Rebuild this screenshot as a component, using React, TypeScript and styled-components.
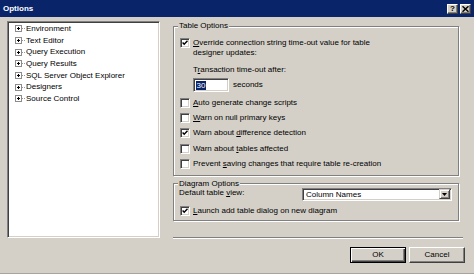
import React from "react";
import styled, { createGlobalStyle } from "styled-components";

const GlobalStyle = createGlobalStyle`
  html, body { margin: 0; padding: 0; background: #d4d0c8; }
  body {
    font-family: "Liberation Sans", Arial, sans-serif;
    font-size: 8px;
    color: #000;
  }
  * { box-sizing: border-box; }
`;

const Dialog = styled.div`
  width: 474px;
  height: 274px;
  background: #d4d0c8;
  display: flex;
  flex-direction: column;
  overflow: hidden;
  border-bottom: 1px solid #a8a49c;
`;

const TitleBar = styled.div`
  height: 17px;
  flex-shrink: 0;
  background: #0a246a;
  display: flex;
  align-items: center;
  padding: 0 3px 0 3px;
`;

const Title = styled.div`
  flex: 1;
  color: #fff;
  font-weight: bold;
  font-size: 8px;
`;

const CaptionButtons = styled.div`
  display: flex;
  gap: 2px;
`;

const CaptionButton = styled.div`
  width: 11px;
  height: 10px;
  background: #d4d0c8;
  border: 1px solid;
  border-color: #fff #404040 #404040 #fff;
  box-shadow: inset -1px -1px 0 #808080;
  display: flex;
  align-items: center;
  justify-content: center;
  font-weight: bold;
  font-size: 8px;
  line-height: 1;
`;

const Body = styled.div`
  flex: 1;
  display: flex;
  align-items: flex-start;
  padding: 4px 0 0 7px;
`;

const TreePane = styled.div`
  width: 153px;
  height: 217px;
  background: #fff;
  border: 1px solid;
  border-color: #808080 #fff #fff #808080;
  box-shadow: inset 1px 1px 0 #404040, inset -1px -1px 0 #d4d0c8;
  padding: 1px 0 0 7px;
  display: flex;
  flex-direction: column;
`;

const TreeRow = styled.div`
  height: 11.7px;
  display: flex;
  align-items: center;
  white-space: nowrap;
  line-height: 10px;
`;

const TreeIcon = () => (
  <svg width="11" height="7" viewBox="0 0 11 7" style={{ flexShrink: 0 }}>
    <rect x="0.5" y="0.5" width="6" height="6" fill="#fff" stroke="#8c8c8c" strokeWidth="1" />
    <path d="M2 3.5H5M3.5 2V5" stroke="#000" strokeWidth="1" />
    <path d="M7 3.5H8M9 3.5H10" stroke="#9a9a9a" strokeWidth="1" />
  </svg>
);

const RightPane = styled.div`
  margin-left: 13px;
  width: 292px;
  display: flex;
  flex-direction: column;
`;

const GroupBox = styled.div<{ $top: number; $pt: number; $pb: number }>`
  position: relative;
  width: 286px;
  margin-top: ${(p) => p.$top}px;
  border: 1px solid #808080;
  box-shadow: inset 1px 1px 0 #fff, 1px 1px 0 #fff;
  padding: ${(p) => p.$pt}px 5px ${(p) => p.$pb}px 6px;
  display: flex;
  flex-direction: column;
`;

const GroupLabel = styled.div<{ $top: number }>`
  position: absolute;
  top: ${(p) => p.$top}px;
  left: 4px;
  padding: 0 1px;
  line-height: 10px;
  background: #d4d0c8;
  white-space: nowrap;
`;

const CheckRow = styled.div<{ $mt: number }>`
  display: flex;
  align-items: flex-start;
  gap: 3px;
  line-height: 10px;
  margin-top: ${(p) => p.$mt}px;
  white-space: nowrap;
`;

const CheckBoxFrame = styled.div`
  width: 10px;
  height: 10px;
  flex-shrink: 0;
  background: #fff;
  border: 1px solid;
  border-color: #808080 #fff #fff #808080;
  box-shadow: inset 1px 1px 0 #404040, inset -1px -1px 0 #d4d0c8;
  display: flex;
  align-items: center;
  justify-content: center;
`;

const Check = ({ checked }: { checked?: boolean }) => (
  <CheckBoxFrame>
    {checked && (
      <svg width="6" height="6" viewBox="0 0 6 6">
        <path d="M0.6 2.6L2.2 4.3L5.5 0.8" stroke="#000" strokeWidth="1.4" fill="none" />
      </svg>
    )}
  </CheckBoxFrame>
);

const Key = styled.span`
  text-decoration: underline;
  text-underline-offset: 1px;
`;

const Indented = styled.div<{ $mt: number }>`
  padding-left: 13px;
  margin-top: ${(p) => p.$mt}px;
  line-height: 10px;
  display: flex;
  align-items: center;
  gap: 4px;
`;

const TextBox = styled.div`
  width: 36px;
  height: 14px;
  background: #fff;
  border: 1px solid;
  border-color: #808080 #fff #fff #808080;
  box-shadow: inset 1px 1px 0 #404040, inset -1px -1px 0 #d4d0c8;
  padding: 2px 0 0 2px;
  display: flex;
  align-items: flex-start;
`;

const Selected = styled.span`
  background: #0a246a;
  color: #fff;
  line-height: 9px;
  padding: 0 0.5px;
`;

const ComboRow = styled.div`
  display: grid;
  grid-template-columns: 123px 150px;
  align-items: start;
  margin-left: -1px;
  line-height: 10px;
`;

const ComboBox = styled.div`
  height: 13px;
  background: #fff;
  border: 1px solid;
  border-color: #808080 #fff #fff #808080;
  box-shadow: inset 1px 1px 0 #404040, inset -1px -1px 0 #d4d0c8;
  padding: 1px 1px 1px 3px;
  display: flex;
  align-items: center;
  gap: 2px;
`;

const ComboText = styled.span`
  flex: 1;
  line-height: 9px;
`;

const ComboButton = styled.div`
  width: 11px;
  height: 10px;
  margin-top: 0;
  background: #d4d0c8;
  border: 1px solid;
  border-color: #d4d0c8 #404040 #404040 #d4d0c8;
  box-shadow: inset 1px 1px 0 #fff, inset -1px -1px 0 #808080;
  display: flex;
  align-items: center;
  justify-content: center;
`;

const Separator = styled.div`
  width: 290px;
  margin-top: 16px;
  height: 2px;
  border-top: 1px solid #808080;
  border-bottom: 1px solid #fff;
`;

const ButtonRow = styled.div`
  display: flex;
  justify-content: flex-end;
  gap: 3px;
  margin-top: 8px;
`;

const PushButton = styled.div<{ $default?: boolean }>`
  width: 56px;
  height: 16px;
  background: #d4d0c8;
  display: flex;
  align-items: center;
  justify-content: center;
  line-height: 10px;
  border: 1px solid;
  border-color: ${(p) => (p.$default ? "#000" : "#fff #404040 #404040 #fff")};
  box-shadow: ${(p) =>
    p.$default
      ? "inset 1px 1px 0 #fff, inset -1px -1px 0 #404040, inset -2px -2px 0 #808080"
      : "inset -1px -1px 0 #808080"};
`;

const treeItems = [
  "Environment",
  "Text Editor",
  "Query Execution",
  "Query Results",
  "SQL Server Object Explorer",
  "Designers",
  "Source Control",
];

export default function App() {
  return (
    <>
      <GlobalStyle />
      <Dialog>
        <TitleBar>
          <Title>Options</Title>
          <CaptionButtons>
            <CaptionButton>?</CaptionButton>
            <CaptionButton>
              <svg width="7" height="6" viewBox="0 0 7 6">
                <path d="M0.5 0.3L6.5 5.7M6.5 0.3L0.5 5.7" stroke="#000" strokeWidth="1.5" />
              </svg>
            </CaptionButton>
          </CaptionButtons>
        </TitleBar>
        <Body>
          <TreePane>
            {treeItems.map((t) => (
              <TreeRow key={t}>
                <TreeIcon />
                {t}
              </TreeRow>
            ))}
          </TreePane>
          <RightPane>
            <GroupBox $top={5} $pt={11} $pb={6}>
              <GroupLabel $top={-6}>Table Options</GroupLabel>
              <CheckRow $mt={0}>
                <Check checked />
                <span>
                  <Key>O</Key>verride connection string time-out value for table
                  <br />
                  designer updates:
                </span>
              </CheckRow>
              <Indented $mt={7}>
                <span>
                  T<Key>r</Key>ansaction time-out after:
                </span>
              </Indented>
              <Indented $mt={3}>
                <TextBox>
                  <Selected>30</Selected>
                </TextBox>
                <span>seconds</span>
              </Indented>
              <CheckRow $mt={5.7}>
                <Check />
                <span>
                  <Key>A</Key>uto generate change scripts
                </span>
              </CheckRow>
              <CheckRow $mt={5.3}>
                <Check />
                <span>
                  <Key>W</Key>arn on null primary keys
                </span>
              </CheckRow>
              <CheckRow $mt={5.3}>
                <Check checked />
                <span>
                  Warn about <Key>d</Key>ifference detection
                </span>
              </CheckRow>
              <CheckRow $mt={5.3}>
                <Check />
                <span>
                  Warn about <Key>t</Key>ables affected
                </span>
              </CheckRow>
              <CheckRow $mt={5.3}>
                <Check />
                <span>
                  Prevent <Key>s</Key>aving changes that require table re-creation
                </span>
              </CheckRow>
            </GroupBox>
            <GroupBox $top={7} $pt={4} $pb={4}>
              <GroupLabel $top={-5}>Diagram Options</GroupLabel>
              <ComboRow>
                <span>
                  Default table <Key>v</Key>iew:
                </span>
                <ComboBox>
                  <ComboText>Column Names</ComboText>
                  <ComboButton>
                    <svg width="5" height="3" viewBox="0 0 5 3">
                      <path d="M0 0H5L2.5 3Z" fill="#000" />
                    </svg>
                  </ComboButton>
                </ComboBox>
              </ComboRow>
              <CheckRow $mt={5}>
                <Check checked />
                <span>
                  <Key>L</Key>aunch add table dialog on new diagram
                </span>
              </CheckRow>
            </GroupBox>
            <Separator />
            <ButtonRow>
              <PushButton $default>OK</PushButton>
              <PushButton>Cancel</PushButton>
            </ButtonRow>
          </RightPane>
        </Body>
      </Dialog>
    </>
  );
}
